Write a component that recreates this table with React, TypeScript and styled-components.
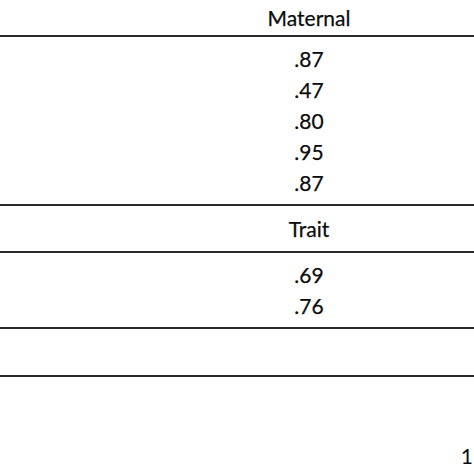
import styled, { createGlobalStyle } from "styled-components";

const GlobalStyle = createGlobalStyle`
  html, body {
    margin: 0;
    padding: 0;
    background: #ffffff;
  }
  body {
    font-family: Lato, "Open Sans", sans-serif;
    color: #0c0c0c;
  }
`;

const Page = styled.div`
  width: 474px;
  height: 474px;
  overflow: hidden;
  display: flex;
  flex-direction: column;
`;

const Rule = styled.div`
  height: 2px;
  background: #2a2a2a;
`;

const Row = styled.div<{ h: number }>`
  display: grid;
  grid-template-columns: 250px 118px 1fr;
  align-items: center;
  height: ${(p) => p.h}px;
  font-size: 21px;
  -webkit-text-stroke: 0.25px #0c0c0c;
`;

const Cell = styled.div`
  grid-column: 2;
  text-align: center;
  line-height: 1;
`;

const Block = styled.div`
  padding: 6px 0;
`;

const Footer = styled.div`
  flex: 1;
  display: flex;
  justify-content: flex-end;
  align-items: flex-end;
  padding: 0 1px 6px 0;
  font-size: 21px;
`;

const Header = ({ label, h }: { label: string; h: number }) => (
  <Row h={h}>
    <Cell>{label}</Cell>
  </Row>
);

const Values = ({ items }: { items: string[] }) => (
  <Block>
    {items.map((v, i) => (
      <Row key={i} h={31}>
        <Cell>{v}</Cell>
      </Row>
    ))}
  </Block>
);

export default function App() {
  return (
    <Page>
      <GlobalStyle />
      <Header label="Maternal" h={35} />
      <Rule />
      <Values items={[".87", ".47", ".80", ".95", ".87"]} />
      <Rule />
      <Header label="Trait" h={45} />
      <Rule />
      <Values items={[".69", ".76"]} />
      <Rule />
      <Row h={46} />
      <Rule />
      <Footer>1</Footer>
    </Page>
  );
}
